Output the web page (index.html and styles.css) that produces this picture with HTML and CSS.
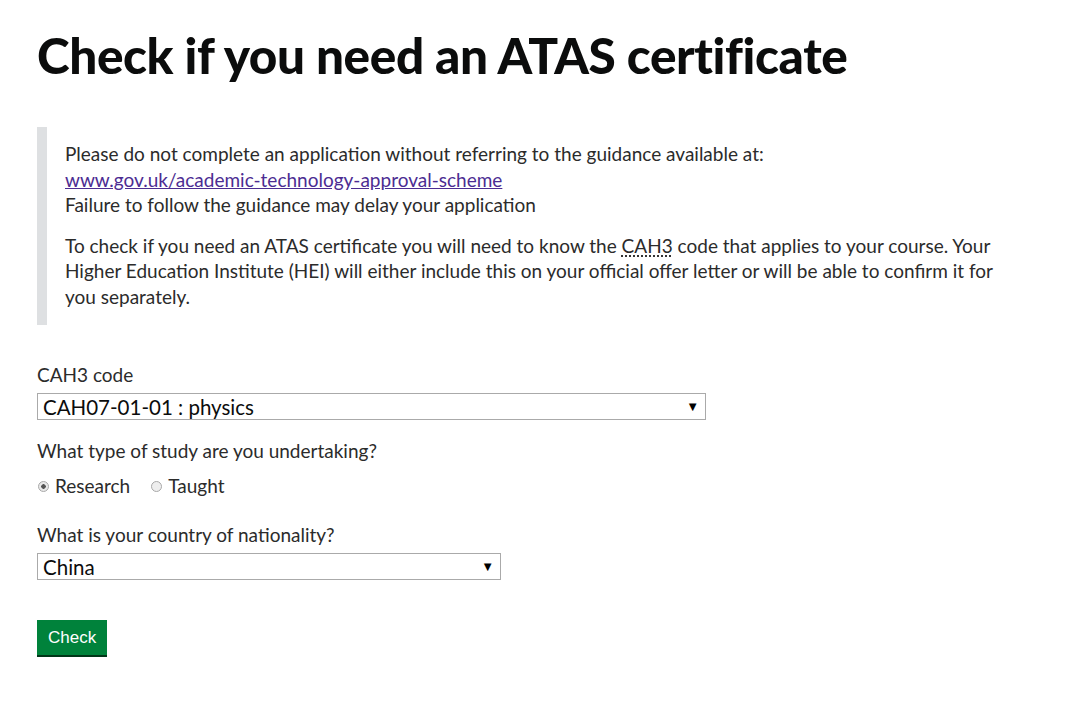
FILE: index.html
```html
<!DOCTYPE html>
<html lang="en">
<head>
  <meta charset="UTF-8" />
  <title>Check if you need an ATAS certificate</title>
  <link rel="stylesheet" href="styles.css">
</head>
<body>
  <main class="page">
    <h1 class="title">Check if you need an ATAS certificate</h1>

    <div class="inset">
      <p>Please do not complete an application without referring to the guidance available at:<br>
        <a href="#">www.gov.uk/academic-technology-approval-scheme</a><br>
        Failure to follow the guidance may delay your application</p>
      <p>To check if you need an ATAS certificate you will need to know the <abbr title="Common Aggregation Hierarchy">CAH3</abbr> code that applies to your course. Your Higher Education Institute (HEI) will either include this on your official offer letter or will be able to confirm it for you separately.</p>
    </div>

    <form class="form">
      <div class="field">
        <label class="label" for="cah3">CAH3 code</label>
        <div class="select-wrap wide">
          <select id="cah3" class="select">
            <option>CAH07-01-01 : physics</option>
          </select>
        </div>
      </div>

      <div class="field">
        <span class="label">What type of study are you undertaking?</span>
        <div class="radios">
          <label class="radio"><input type="radio" name="study" checked> Research</label>
          <label class="radio"><input type="radio" name="study"> Taught</label>
        </div>
      </div>

      <div class="field">
        <label class="label" for="country">What is your country of nationality?</label>
        <div class="select-wrap narrow">
          <select id="country" class="select">
            <option>China</option>
          </select>
        </div>
      </div>

      <button type="button" class="button">Check</button>
    </form>
  </main>
</body>
</html>
```

FILE: styles.css
```css
body { margin: 0; background: #fff; color: #0b0c0c; font-family: Lato, "Liberation Sans", sans-serif; }
.page { padding: 25px 37px 40px; }

.title { margin: 0 0 42px; font-size: 49.5px; line-height: 60px; font-weight: 900; letter-spacing: -0.4px; }

.inset { border-left: 10px solid #dee0e2; padding: 14px 0 16px 18px; margin-bottom: 38px; width: 935px; }
.inset p { margin: 0 0 15px; font-size: 19px; line-height: 25.5px; color: #2b2b2b; }
.inset p:last-child { margin-bottom: 0; }
.inset a { color: #4c2c92; }
.inset abbr { text-decoration: underline dotted; text-underline-offset: 3px; }

.field { margin-bottom: 19px; }
.label { display: block; font-size: 19px; line-height: 24px; color: #2b2b2b; margin-bottom: 6px; }

.select-wrap { position: relative; }
.select-wrap.wide { width: 669px; }
.select-wrap.narrow { width: 464px; }
.select-wrap::after { content: "\25BC"; position: absolute; right: 7px; top: 6px; font-size: 13px; line-height: 14px; color: #000; pointer-events: none; }
.select { appearance: none; display: block; width: 100%; height: 27px; border: 1px solid #aaa; border-radius: 0; background: #fff; font-family: Lato, "Liberation Sans", sans-serif; font-size: 20.5px; padding: 0 5px; color: #0b0c0c; }

.radios { display: flex; gap: 20px; padding-top: 5px; }
.radio { display: flex; align-items: center; gap: 6px; font-size: 19px; line-height: 24px; color: #2b2b2b; }
.radio input { appearance: none; margin: 0 0 0 1px; width: 11px; height: 11px; border: 1px solid #a8a8a8; border-radius: 50%; background: #eee; }
.radio input:checked { background: radial-gradient(circle, #555 0 2px, #e8e8e8 2.5px); }
.field:nth-child(2) { margin-bottom: 25px; }

.button { margin-top: 21px; font-family: "Liberation Sans", Arial, sans-serif; font-size: 17px; color: #fff; background: #00823b; border: 0; padding: 8px 11px 7px; box-shadow: 0 2px 0 #003618; }
```
